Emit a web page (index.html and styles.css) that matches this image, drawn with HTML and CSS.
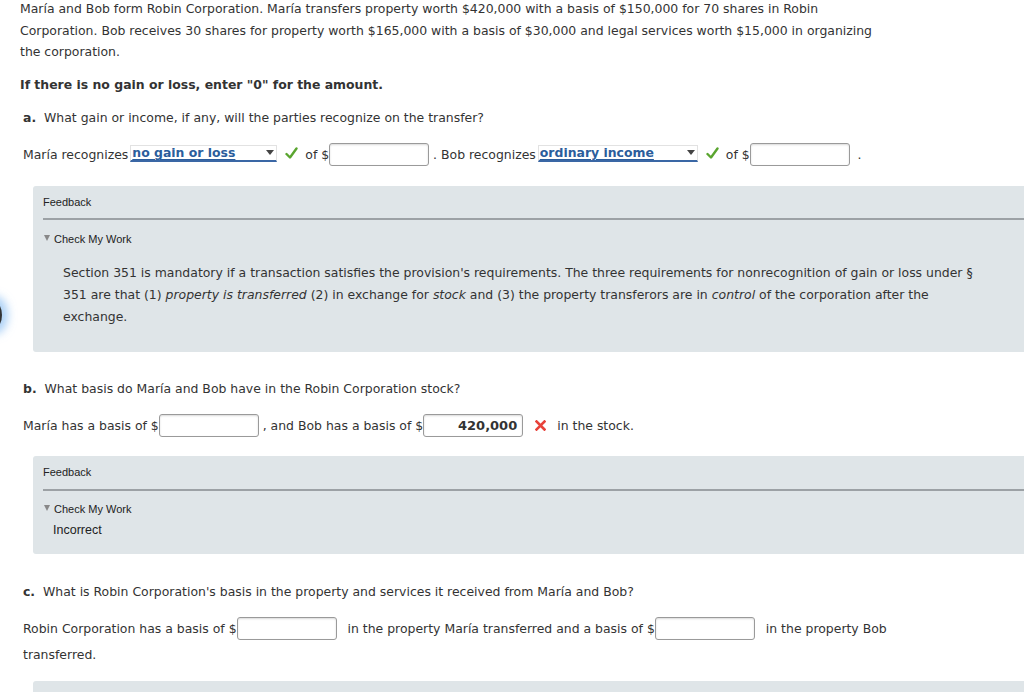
FILE: index.html
```html
<!DOCTYPE html>
<html>
<head>
<meta charset="utf-8">
<link rel="stylesheet" href="styles.css">
</head>
<body>
<div class="page">
  <p class="intro">María and Bob form Robin Corporation. María transfers property worth $420,000 with a basis of $150,000 for 70 shares in Robin Corporation. Bob receives 30 shares for property worth $165,000 with a basis of $30,000 and legal services worth $15,000 in organizing the corporation.</p>
  <p class="note">If there is no gain or loss, enter "0" for the amount.</p>

  <p class="question q-a"><b>a.</b>&nbsp; What gain or income, if any, will the parties recognize on the transfer?</p>
  <p class="answer ans-a">María recognizes <span class="select sel-1">no gain or loss<span class="caret"></span></span><svg class="check" width="13" height="13" viewBox="0 0 13 13"><path d="M1.5 7 L5 10.5 L11.5 1.5" fill="none" stroke="#5aa52f" stroke-width="2.4" stroke-linecap="round" stroke-linejoin="round"/></svg>of $<span class="input"></span> . Bob recognizes <span class="select sel-2">ordinary income<span class="caret"></span></span><svg class="check" width="13" height="13" viewBox="0 0 13 13"><path d="M1.5 7 L5 10.5 L11.5 1.5" fill="none" stroke="#5aa52f" stroke-width="2.4" stroke-linecap="round" stroke-linejoin="round"/></svg>of $<span class="input"></span> &nbsp;.</p>

  <div class="feedback fb-1">
    <div class="fb-title">Feedback</div>
    <div class="fb-toggle"><span class="tri"></span>Check My Work</div>
    <p class="fb-body">Section 351 is mandatory if a transaction satisfies the provision's requirements. The three requirements for nonrecognition of gain or loss under § 351 are that (1) <i>property is transferred</i> (2) in exchange for <i>stock</i> and (3) the property transferors are in <i>control</i> of the corporation after the exchange.</p>
  </div>

  <p class="question q-b"><b>b.</b>&nbsp; What basis do María and Bob have in the Robin Corporation stock?</p>
  <p class="answer ans-b">María has a basis of $<span class="input"></span> , and Bob has a basis of $<span class="input filled">420,000</span><svg class="cross" width="11" height="11" viewBox="0 0 11 11"><path d="M1.5 1.5 L9.5 9.5 M9.5 1.5 L1.5 9.5" fill="none" stroke="#e8423a" stroke-width="2.6" stroke-linecap="square"/></svg>in the stock.</p>

  <div class="feedback fb-2">
    <div class="fb-title">Feedback</div>
    <div class="fb-toggle"><span class="tri"></span>Check My Work</div>
    <div class="fb-result">Incorrect</div>
  </div>

  <p class="question q-c"><b>c.</b>&nbsp; What is Robin Corporation's basis in the property and services it received from María and Bob?</p>
  <p class="answer ans-c">Robin Corporation has a basis of $<span class="input"></span><span class="gap"></span>in the property María transferred and a basis of $<span class="input"></span><span class="gap"></span>in the property Bob transferred.</p>

  <div class="feedback fb-3"></div>
</div>
<div class="side-glow"></div>
</body>
</html>
```

FILE: styles.css
```css
html, body {
  margin: 0;
  padding: 0;
  background: #fff;
  overflow: hidden;
}
body {
  font-family: "DejaVu Sans", Verdana, sans-serif;
  font-size: 12.45px;
  color: #333;
  width: 1024px;
  height: 692px;
  position: relative;
}
.page {
  padding-left: 20px;
}
p { margin: 0; }
.intro {
  margin-top: -2px;
  line-height: 21.5px;
  width: 862px;
}
.note {
  font-weight: bold;
  margin-top: 11.5px;
  line-height: 21.5px;
}
.question {
  line-height: 21.5px;
  padding-left: 3px;
}
.question b { font-weight: bold; }
.q-a { margin-top: 11.5px; }
.answer {
  padding-left: 3px;
  line-height: 26px;
}
.ans-a { margin-top: 13px; }

.select {
  display: inline-block;
  position: relative;
  vertical-align: middle;
  box-sizing: border-box;
  height: 17px;
  line-height: 14px;
  padding: 0 0 0 1px;
  border: 1px solid #e2e2e2;
  border-bottom: 2px solid #3a67a5;
  color: #2b5d9c;
  font-weight: bold;
  text-decoration: underline;
  text-underline-offset: 2px;
  text-decoration-thickness: 1px;
  margin-top: -3px;
}
.sel-1 { width: 147px; margin-left: -2px; }
.sel-2 { width: 160px; margin-left: -2px; }
.caret {
  position: absolute;
  right: 2px;
  top: 4px;
  width: 0;
  height: 0;
  border-left: 4px solid transparent;
  border-right: 4px solid transparent;
  border-top: 5px solid #444;
}
.check {
  display: inline-block;
  vertical-align: -1px;
  margin: 0 7px 0 8px;
}
.input {
  display: inline-block;
  vertical-align: middle;
  box-sizing: border-box;
  width: 100px;
  height: 23px;
  border: 1px solid #9a9a9a;
  border-radius: 3px;
  box-shadow: inset 0 1px 2px rgba(0,0,0,0.15);
  background: #fff;
  margin-top: -2px;
}
.filled {
  text-align: right;
  font-weight: bold;
  font-size: 13px;
  line-height: 21px;
  padding-right: 5px;
  color: #333;
}
.cross {
  display: inline-block;
  vertical-align: -1px;
  margin: 0 11px 0 12px;
}
.gap {
  display: inline-block;
  width: 11px;
}

.feedback {
  background: #dfe5e8;
  margin-left: 13px;
  border-radius: 3px 0 0 3px;
  font-family: "Liberation Sans", Arial, sans-serif;
  color: #222;
}
.fb-1 { margin-top: 18px; padding-bottom: 24px; }
.fb-title {
  font-size: 11px;
  padding: 10px 0 0 10px;
  height: 32px;
  box-sizing: border-box;
}
.fb-toggle {
  font-size: 11px;
  margin-left: 10px;
  border-top: 2px solid #9ca1a5;
  padding-top: 12px;
  line-height: 14px;
}
.tri {
  display: inline-block;
  width: 0;
  height: 0;
  border-left: 3px solid transparent;
  border-right: 3px solid transparent;
  border-top: 6px solid #888;
  margin: 0 4px 0 1px;
  vertical-align: 2px;
}
.fb-body {
  font-family: "DejaVu Sans", Verdana, sans-serif;
  font-size: 12.45px;
  color: #333;
  line-height: 22px;
  padding: 16px 44px 0 30px;
}
.q-b { margin-top: 26px; }
.ans-b { margin-top: 14px; }
.fb-2 { margin-top: 17px; padding-bottom: 17px; }
.fb-2 .fb-title { padding-top: 10px; height: 33px; }
.fb-2 .fb-toggle { padding-top: 11px; }
.fb-result {
  font-size: 12.5px;
  padding-left: 20px;
  margin-top: 7px;
  line-height: 14px;
}
.q-c { margin-top: 27px; }
.ans-c { margin-top: 13px; width: 880px; }
.fb-3 { margin-top: 13px; height: 30px; }

.side-glow {
  position: absolute;
  left: -12px;
  top: 302px;
  width: 14px;
  height: 26px;
  border-radius: 50%;
  background: #333;
  box-shadow: 0 0 8px 6px rgba(120, 180, 240, 0.6);
}
```
